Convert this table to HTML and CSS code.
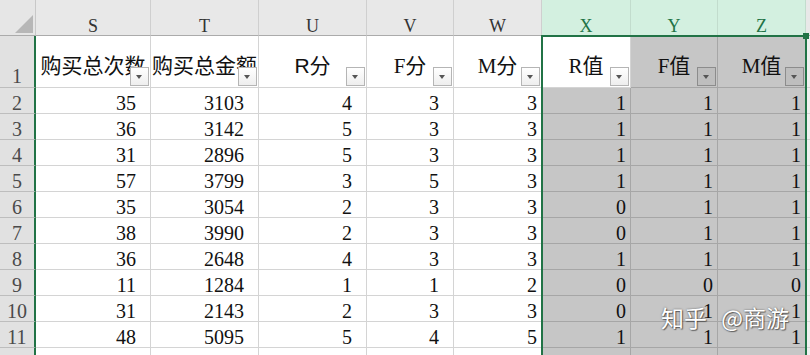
FILE: index.html
```html
<!DOCTYPE html>
<html lang="zh">
<head>
<meta charset="utf-8">
<title>Sheet</title>
<link rel="stylesheet" href="styles.css">
</head>
<body>
<div class="sheet">
  <div class="corner"></div>
  <div class="ch">S</div><div class="ch">T</div><div class="ch">U</div><div class="ch">V</div><div class="ch">W</div>
  <div class="ch sel">X</div><div class="ch sel">Y</div><div class="ch sel">Z</div><div class="ch ex"></div>

  <div class="rh r1">1</div>
  <div class="h">购买总次数<span class="f"></span></div>
  <div class="h">购买总金额<span class="f"></span></div>
  <div class="h sans">R分<span class="f"></span></div>
  <div class="h">F分<span class="f"></span></div>
  <div class="h">M分<span class="f"></span></div>
  <div class="h">R值<span class="f"></span></div>
  <div class="h s">F值<span class="f"></span></div>
  <div class="h s">M值<span class="f"></span></div>
  <div class="x"></div>

  <div class="rh">2</div><div class="c n">35</div><div class="c n">3103</div><div class="c n">4</div><div class="c n">3</div><div class="c">3</div><div class="c s">1</div><div class="c s">1</div><div class="c s">1</div><div class="x"></div>
  <div class="rh">3</div><div class="c n">36</div><div class="c n">3142</div><div class="c n">5</div><div class="c n">3</div><div class="c">3</div><div class="c s">1</div><div class="c s">1</div><div class="c s">1</div><div class="x"></div>
  <div class="rh">4</div><div class="c n">31</div><div class="c n">2896</div><div class="c n">5</div><div class="c n">3</div><div class="c">3</div><div class="c s">1</div><div class="c s">1</div><div class="c s">1</div><div class="x"></div>
  <div class="rh">5</div><div class="c n">57</div><div class="c n">3799</div><div class="c n">3</div><div class="c n">5</div><div class="c">3</div><div class="c s">1</div><div class="c s">1</div><div class="c s">1</div><div class="x"></div>
  <div class="rh">6</div><div class="c n">35</div><div class="c n">3054</div><div class="c n">2</div><div class="c n">3</div><div class="c">3</div><div class="c s">0</div><div class="c s">1</div><div class="c s">1</div><div class="x"></div>
  <div class="rh">7</div><div class="c n">38</div><div class="c n">3990</div><div class="c n">2</div><div class="c n">3</div><div class="c">3</div><div class="c s">0</div><div class="c s">1</div><div class="c s">1</div><div class="x"></div>
  <div class="rh">8</div><div class="c n">36</div><div class="c n">2648</div><div class="c n">4</div><div class="c n">3</div><div class="c">3</div><div class="c s">1</div><div class="c s">1</div><div class="c s">1</div><div class="x"></div>
  <div class="rh">9</div><div class="c n">11</div><div class="c n">1284</div><div class="c n">1</div><div class="c n">1</div><div class="c">2</div><div class="c s">0</div><div class="c s">0</div><div class="c s">0</div><div class="x"></div>
  <div class="rh">10</div><div class="c n">31</div><div class="c n">2143</div><div class="c n">2</div><div class="c n">3</div><div class="c">3</div><div class="c s">0</div><div class="c s">1</div><div class="c s">1</div><div class="x"></div>
  <div class="rh">11</div><div class="c n">48</div><div class="c n">5095</div><div class="c n">5</div><div class="c n">4</div><div class="c">5</div><div class="c s">1</div><div class="c s">1</div><div class="c s">1</div><div class="x"></div>
  <div class="rh"></div><div class="c n"></div><div class="c n"></div><div class="c n"></div><div class="c n"></div><div class="c"></div><div class="c s"></div><div class="c s"></div><div class="c s"></div><div class="x"></div>

  <div class="selbox"></div>
  <div class="handle"></div>
  <div class="wm">知乎 @商游</div>
</div>
</body>
</html>
```
FILE: styles.css
```css
html, body {
  margin: 0;
  padding: 0;
  overflow: hidden;
  background: #ffffff;
}

.sheet {
  position: relative;
  width: 810px;
  height: 355px;
  overflow: hidden;
  display: grid;
  grid-template-columns: 36px 115px 108px 108px 87px 88px 89px 87px 88px 4px;
  grid-template-rows: 36px 52px repeat(11, 26px);
  font-family: "Liberation Serif", "Noto Sans CJK SC", serif;
  color: #111;
}

.sheet > div {
  box-sizing: border-box;
}

.corner {
  position: relative;
  background: #e6e6e6;
  border-right: 1px solid #c8c8c8;
  border-bottom: 1px solid #ababab;
}

.corner::after {
  content: "";
  position: absolute;
  right: 2px;
  bottom: 2px;
  width: 0;
  height: 0;
  border-left: 18px solid transparent;
  border-bottom: 18px solid #b7b7b7;
}

.ch {
  display: flex;
  align-items: flex-end;
  justify-content: center;
  background: #e8e8e8;
  border-right: 1px solid #cfcfcf;
  border-bottom: 1px solid #ababab;
  font-size: 18px;
  line-height: 18px;
  color: #333;
}

.ch.sel {
  background: #d3f0e0;
  color: #217346;
  border-right-color: #c2dccd;
}

.ch.ex {
  border-right: none;
}

.rh {
  display: flex;
  align-items: flex-end;
  justify-content: center;
  background: #e1e1e1;
  border-right: 2px solid #217346;
  border-bottom: 1px solid #bdbdbd;
  font-size: 20px;
  line-height: 20px;
  color: #4a4a4a;
}

.rh.r1 {
  padding-bottom: 1px;
}

.h {
  position: relative;
  display: flex;
  align-items: center;
  justify-content: center;
  padding-top: 4px;
  white-space: nowrap;
  border-right: 1px solid #d4d4d4;
  border-bottom: 1px solid #d4d4d4;
  font-size: 21px;
  color: #111;
}

.h.sans {
  font-family: "Liberation Sans", "Noto Sans CJK SC", sans-serif;
}

.h.s {
  background: #c6c6c6;
  border-right-color: #a6a6a6;
  border-bottom-color: #a6a6a6;
}

.f {
  position: absolute;
  right: 1px;
  bottom: 1px;
  width: 19px;
  height: 19px;
  box-sizing: border-box;
  border: 1px solid #b5b5b5;
  background: linear-gradient(#ffffff, #eeeeee);
}

.f::after {
  content: "";
  position: absolute;
  left: 5px;
  top: 7px;
  width: 0;
  height: 0;
  border-left: 3.5px solid transparent;
  border-right: 3.5px solid transparent;
  border-top: 4px solid #555;
}

.h.s .f {
  background: #bebebe;
  border-color: #8c8c8c;
}

.c {
  display: flex;
  align-items: flex-end;
  justify-content: flex-end;
  padding-right: 4px;
  border-right: 1px solid #d4d4d4;
  border-bottom: 1px solid #d4d4d4;
  font-size: 20px;
  line-height: 20px;
  color: #111;
}

.c.n {
  padding-right: 14px;
}

.c.s {
  background: #c6c6c6;
  border-right-color: #a6a6a6;
  border-bottom-color: #a6a6a6;
}

.x {
  background: #f0f0f0;
  border-bottom: 1px solid #d4d4d4;
}

.selbox {
  position: absolute;
  left: 541px;
  top: 35px;
  width: 266px;
  height: 340px;
  border: 2px solid #217346;
  pointer-events: none;
}

.handle {
  position: absolute;
  left: 803px;
  top: 33px;
  width: 6px;
  height: 6px;
  background: #217346;
}

.wm {
  position: absolute;
  left: 661px;
  top: 306px;
  font-family: "Noto Sans CJK SC", sans-serif;
  font-size: 23px;
  line-height: 23px;
  word-spacing: 9px;
  color: #ffffff;
  white-space: nowrap;
  text-shadow: 0 0 2px rgba(0, 0, 0, 0.55), 1px 1px 1px rgba(0, 0, 0, 0.45);
}
```
